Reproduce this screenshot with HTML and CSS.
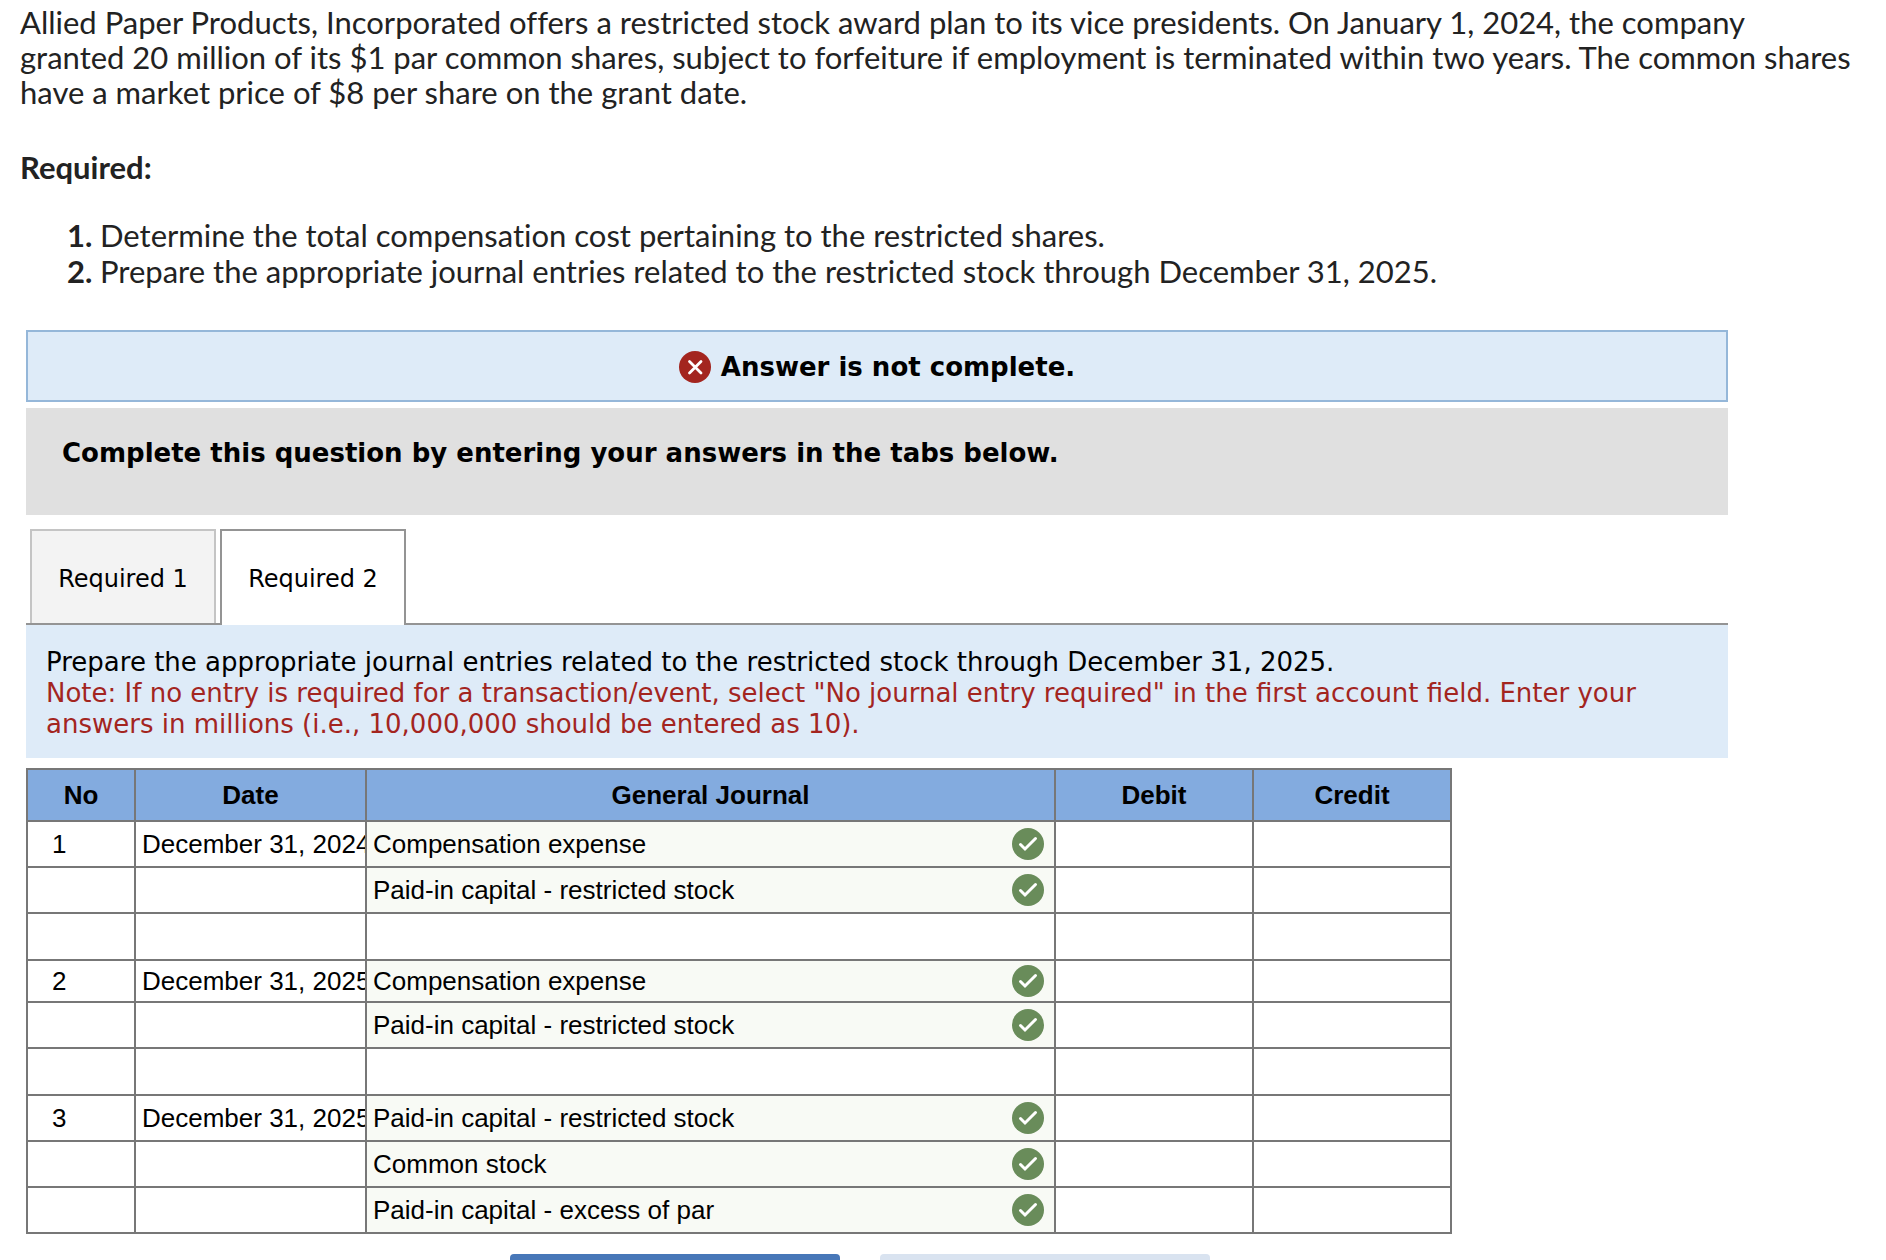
FILE: index.html
```html
<!DOCTYPE html>
<html lang="en">
<head>
  <meta charset="UTF-8" />
  <meta name="viewport" content="width=device-width, initial-scale=1.0" />
  <title>Restricted Stock Award Plan</title>
  <link rel="stylesheet" href="styles.css">
</head>
<body>

  <!-- icons reused in the banner and the journal -->
  <svg class="icon-defs" aria-hidden="true">
    <symbol id="icon-check" viewBox="0 0 32 32">
      <circle cx="16" cy="16" r="16" fill="#698c5a" />
      <path d="M8.5 16.5 L13 21 L23.5 10.5" fill="none" stroke="#fff" stroke-width="3" stroke-linecap="round" stroke-linejoin="miter" />
    </symbol>
    <symbol id="icon-cross" viewBox="0 0 32 32">
      <circle cx="16" cy="16" r="16" fill="#a3251f" />
      <path d="M10.5 10.5 L22 22 M22 10.5 L10.5 22" fill="none" stroke="#fff" stroke-width="2.8" stroke-linecap="round" />
    </symbol>
  </svg>

  <section class="question">
    <p class="intro">Allied Paper Products, Incorporated offers a restricted stock award plan to its vice presidents. On January 1, 2024, the company<br>
      granted 20 million of its $1 par common shares, subject to forfeiture if employment is terminated within two years. The common shares<br>
      have a market price of $8 per share on the grant date.</p>
    <h2>Required:</h2>
    <ol>
      <li>Determine the total compensation cost pertaining to the restricted shares.</li>
      <li>Prepare the appropriate journal entries related to the restricted stock through December 31, 2025.</li>
    </ol>
  </section>

  <main class="answer">
    <div class="status">
      <svg class="icon"><use href="#icon-cross" /></svg>
      <span>Answer is not complete.</span>
    </div>

    <div class="directions">Complete this question by entering your answers in the tabs below.</div>

    <div class="tabs" role="tablist">
      <button class="tab" type="button" role="tab" aria-selected="false">Required 1</button>
      <button class="tab active" type="button" role="tab" aria-selected="true">Required 2</button>
    </div>

    <div class="prompt">
      <p>Prepare the appropriate journal entries related to the restricted stock through December 31, 2025.</p>
      <p class="note">Note: If no entry is required for a transaction/event, select "No journal entry required" in the first account field. Enter your answers in millions (i.e., 10,000,000 should be entered as 10).</p>
    </div>

    <table class="journal">
      <colgroup>
        <col class="col-no">
        <col class="col-date">
        <col class="col-account">
        <col class="col-amount">
        <col class="col-amount">
      </colgroup>
      <thead>
        <tr><th>No</th><th>Date</th><th>General Journal</th><th>Debit</th><th>Credit</th></tr>
      </thead>
      <tbody>
        <tr>
          <td class="no">1</td>
          <td>December 31, 2024</td>
          <td class="correct"><div class="account">Compensation expense <svg class="icon"><use href="#icon-check" /></svg></div></td>
          <td></td><td></td>
        </tr>
        <tr>
          <td></td><td></td>
          <td class="correct"><div class="account">Paid-in capital - restricted stock <svg class="icon"><use href="#icon-check" /></svg></div></td>
          <td></td><td></td>
        </tr>
        <tr class="blank"><td></td><td></td><td></td><td></td><td></td></tr>
        <tr class="compact">
          <td class="no">2</td>
          <td>December 31, 2025</td>
          <td class="correct"><div class="account">Compensation expense <svg class="icon"><use href="#icon-check" /></svg></div></td>
          <td></td><td></td>
        </tr>
        <tr>
          <td></td><td></td>
          <td class="correct"><div class="account">Paid-in capital - restricted stock <svg class="icon"><use href="#icon-check" /></svg></div></td>
          <td></td><td></td>
        </tr>
        <tr class="blank"><td></td><td></td><td></td><td></td><td></td></tr>
        <tr>
          <td class="no">3</td>
          <td>December 31, 2025</td>
          <td class="correct"><div class="account">Paid-in capital - restricted stock <svg class="icon"><use href="#icon-check" /></svg></div></td>
          <td></td><td></td>
        </tr>
        <tr>
          <td></td><td></td>
          <td class="correct"><div class="account">Common stock <svg class="icon"><use href="#icon-check" /></svg></div></td>
          <td></td><td></td>
        </tr>
        <tr>
          <td></td><td></td>
          <td class="correct"><div class="account">Paid-in capital - excess of par <svg class="icon"><use href="#icon-check" /></svg></div></td>
          <td></td><td></td>
        </tr>
      </tbody>
    </table>

    <div class="pager">
      <button class="prev" type="button" aria-label="Previous"></button>
      <button class="next" type="button" aria-label="Next" disabled></button>
    </div>
  </main>

</body>
</html>
```
FILE: styles.css
```css
* {
  box-sizing: border-box;
}
body {
  margin: 0;
  height: 100vh;
  overflow: hidden;
  background: #fff;
  color: #000;
  font-family: Verdana, "DejaVu Sans", sans-serif;
  font-size: 26px;
}
.icon-defs {
  display: none;
}
.icon {
  width: 32px;
  height: 32px;
  flex: none;
}

/* question text */
.question {
  padding: 5px 0 0 20px;
  color: #222;
  font-family: "Proxima Nova", Lato, sans-serif;
  font-size: 31px;
  font-variant-ligatures: none;
  line-height: 35px;
  white-space: nowrap;
}
.question p {
  margin: 0;
}
.question h2 {
  margin: 40px 0 32px;
  font-size: 31px;
}
.question ol {
  margin: 0;
  padding-left: 80px;
  line-height: 36px;
}
.question li::marker {
  font-weight: bold;
}

/* answer area */
.answer {
  margin: 41px 158px 0 26px;
}
.status {
  display: flex;
  align-items: center;
  justify-content: center;
  gap: 10px;
  height: 72px;
  padding-top: 2px;
  background: #deebf8;
  border: 2px solid #95b7d9;
  font-weight: bold;
}
.directions {
  margin-top: 6px;
  padding: 30px 36px 46px;
  background: #e0e0e0;
  font-weight: bold;
  line-height: 31px;
}
.tabs {
  display: flex;
  gap: 4px;
  margin-top: 14px;
  padding-left: 4px;
  border-bottom: 2px solid #949494;
}
.tab {
  width: 186px;
  height: 94px;
  padding: 4px 0 0;
  background: #f3f3f3;
  border: 2px solid #c4c4c4;
  border-bottom: none;
  color: #000;
  font-family: inherit;
  font-size: 24px;
  cursor: pointer;
}
.tab.active {
  height: 96px;
  margin-bottom: -2px;
  padding-top: 2px;
  background: #fff;
  border-color: #949494;
}
.prompt {
  padding: 22px 20px 18px;
  background: #deebf8;
  line-height: 31px;
}
.prompt p {
  margin: 0;
}
.prompt .note {
  color: #a3251f;
}

/* journal */
.journal {
  width: 1426px;
  margin-top: 10px;
  border-collapse: collapse;
  table-layout: fixed;
  font-family: Arial, "Liberation Sans", sans-serif;
}
.col-no { width: 108px; }
.col-date { width: 231px; }
.col-account { width: 689px; }
.col-amount { width: 198px; }
.journal th,
.journal td {
  height: 46px;
  padding: 0 6px;
  border: 2px solid #777;
  line-height: 30px;
  text-align: left;
  white-space: nowrap;
  overflow: hidden;
}
.journal th {
  height: 52px;
  background: #83abdf;
  text-align: center;
}
.journal .blank td {
  height: 47px;
}
.journal .compact td {
  height: 42px;
}
.journal .no {
  padding-left: 24px;
}
.journal .correct {
  background: #f8faf5;
}
.account {
  display: flex;
  align-items: center;
  justify-content: space-between;
  padding-right: 4px;
}

.pager {
  display: flex;
  justify-content: center;
  gap: 40px;
  margin-top: 20px;
  padding-right: 34px;
}
.pager button {
  width: 330px;
  height: 60px;
  border: none;
  border-radius: 4px;
}
.pager .prev {
  background: #4777b8;
}
.pager .next {
  background: #d9e3f0;
}
```
